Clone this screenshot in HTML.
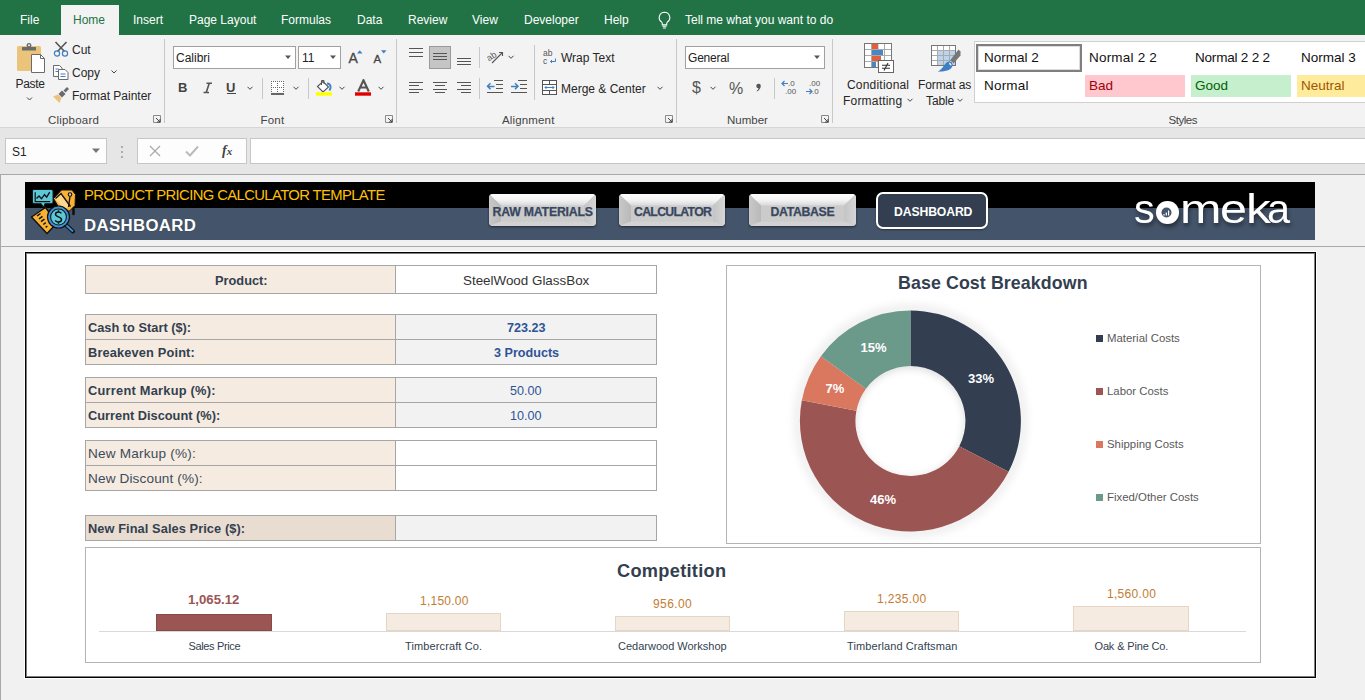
<!DOCTYPE html>
<html><head><meta charset="utf-8">
<style>
*{margin:0;padding:0;box-sizing:border-box}
html,body{width:1365px;height:700px;overflow:hidden;background:#f0f0f0}
body{position:relative;font-family:"Liberation Sans",sans-serif}
.a{position:absolute}
.t{position:absolute;white-space:nowrap;line-height:1;font-family:"Liberation Sans",sans-serif}
#tabs{position:absolute;left:0;top:0;width:1365px;height:35px;background:#217346}
#tabs .t{color:#fff;font-size:12px;top:14px}
#ribbon{position:absolute;left:0;top:35px;width:1365px;height:92px;background:#f3f3f3}
.sep{position:absolute;width:1px;background:#c8c8c8}
.rt{color:#262626;font-size:12px}
.gl{color:#444;font-size:11.5px;top:115px}
.launch{position:absolute;width:8px;height:8px}

.btn{position:absolute;top:193px;width:107px;height:33px;border-radius:4px;background:linear-gradient(#fdfdfd 0,#e6e6e6 18%,#cfcfcf 60%,#c4c4c4 100%);box-shadow:0 1px 2px rgba(0,0,0,.45),inset 0 -2px 2px rgba(0,0,0,.08);font:bold 12px "Liberation Sans",sans-serif;color:#3a4a61;text-align:center;line-height:33px;white-space:nowrap;letter-spacing:-.2px}
.cell{position:absolute;border:1px solid #a6a6a6}
.lab{left:85px;width:311px;background:#f5ebe1}
.val{left:395px;width:262px;background:#f2f2f2}
.lb{left:88px;font-size:12.8px;font-weight:bold;color:#333f4f}
.lr{left:88px;font-size:13.6px;color:#404b5a}
.lg{position:absolute;left:1096px;width:7px;height:7px}
.lgt{left:1107px;font-size:11.4px;color:#595959}
.dl{font-size:13px;font-weight:bold;color:#fff}
.sk{top:188px;font-size:41.5px;color:#fff}
.bt{top:205.5px;font-size:12.3px;font-weight:bold;color:#384760;letter-spacing:-.7px;-webkit-text-stroke:.25px #384760}
.bv{font-size:12px;color:#c27d33}
.bx{top:641px;font-size:11px;color:#333f50}
</style></head><body>

<!-- ============ TITLE TABS ============ -->
<div id="tabs">
  <div class="a" style="left:61px;top:5px;width:58px;height:30px;background:#f3f3f3"></div>
  <div class="t" style="left:20px">File</div>
  <div class="t" style="left:73px;color:#217346">Home</div>
  <div class="t" style="left:133px">Insert</div>
  <div class="t" style="left:189px">Page Layout</div>
  <div class="t" style="left:281px">Formulas</div>
  <div class="t" style="left:357px">Data</div>
  <div class="t" style="left:408px">Review</div>
  <div class="t" style="left:472px">View</div>
  <div class="t" style="left:524px">Developer</div>
  <div class="t" style="left:604px">Help</div>
  <svg class="a" style="left:657px;top:11px" width="15" height="18" viewBox="0 0 15 18"><path d="M7.5 1.2a5.3 5.3 0 0 0-3.2 9.5c.7.6 1 1.3 1 2.2v1h4.4v-1c0-.9.3-1.6 1-2.2a5.3 5.3 0 0 0-3.2-9.5z" fill="none" stroke="#fff" stroke-width="1.1"/><path d="M5.4 15.3h4.2M6 17h3" stroke="#fff" stroke-width="1.1"/></svg>
  <div class="t" style="left:685px">Tell me what you want to do</div>
</div>

<!-- ============ RIBBON ============ -->
<div id="ribbon"></div>
<div class="a" style="left:0;top:127px;width:1365px;height:1px;background:#d6d6d6"></div>

<!-- Clipboard group -->
<svg class="a" style="left:16px;top:42px" width="31" height="32" viewBox="0 0 31 32">
  <rect x="1" y="4" width="24" height="25" rx="1.5" fill="#ebc47c"/>
  <rect x="6" y="5" width="14" height="3.5" rx=".5" fill="#6b6b6b"/>
  <circle cx="13" cy="3.3" r="2.4" fill="#6b6b6b"/>
  <circle cx="13" cy="3.3" r="1" fill="#f3f3f3"/>
  <path d="M15.5 12.5h9l4 4v14h-13z" fill="#fff" stroke="#6b6b6b" stroke-width="1"/>
  <path d="M24.5 12.5v4h4" fill="none" stroke="#6b6b6b" stroke-width="1"/>
</svg>
<div class="t rt" style="left:15.5px;top:78px;letter-spacing:-.3px">Paste</div>
<svg class="a" style="left:26px;top:96px" width="7" height="6" viewBox="0 0 7 6"><path d="M1 1.5l2.5 2.5 2.5-2.5" fill="none" stroke="#444" stroke-width="1"/></svg>

<svg class="a" style="left:53px;top:41px" width="16" height="16" viewBox="0 0 16 16">
  <path d="M2.5 1l9 9.5M13.5 1l-9 9.5" stroke="#555" stroke-width="1.6"/>
  <circle cx="4" cy="12.5" r="2.6" fill="none" stroke="#3f7fc4" stroke-width="1.2"/>
  <circle cx="12" cy="12.5" r="2.6" fill="none" stroke="#3f7fc4" stroke-width="1.2"/>
</svg>
<div class="t rt" style="left:72px;top:44px">Cut</div>

<svg class="a" style="left:52px;top:64px" width="17" height="16" viewBox="0 0 17 16">
  <path d="M1.5 1.5h6l2.5 2.5v8.5h-8.5z" fill="#fff" stroke="#6b6b6b"/>
  <path d="M3.5 5h3M3.5 7.5h3" stroke="#3f7fc4"/>
  <path d="M6.5 5.5h6.5l3 3v7h-9.5z" fill="#fff" stroke="#6b6b6b"/>
  <path d="M8.5 10h5M8.5 12.5h5" stroke="#3f7fc4"/>
</svg>
<div class="t rt" style="left:72px;top:67px">Copy</div>
<svg class="a" style="left:110px;top:69px" width="8" height="6" viewBox="0 0 8 6"><path d="M1.5 1.5l2.5 2.5 2.5-2.5" fill="none" stroke="#444" stroke-width="1"/></svg>

<svg class="a" style="left:52px;top:87px" width="18" height="16" viewBox="0 0 18 16">
  <path d="M1 9.5l5-2 3.5 3.5-2 5z" fill="#ebc47c"/>
  <path d="M6.5 7l3.5 3.5 3.5-3.5-3.5-3.5z" fill="#6b6b6b"/>
  <path d="M11.5 3.5l2 2 3.5-3.5-2-2z" fill="#6b6b6b"/>
</svg>
<div class="t rt" style="left:72px;top:90px">Format Painter</div>

<div class="t gl" style="left:48px;top:114.5px;letter-spacing:.2px">Clipboard</div>
<svg class="launch" style="left:153px;top:115px" viewBox="0 0 8 8"><path d="M.5 7.5V.5h7v7z" fill="none" stroke="#8a8a8a"/><path d="M3 3l4 4M4 7h3V4" fill="none" stroke="#444"/></svg>
<div class="sep" style="left:164px;top:39px;height:84px"></div>

<!-- Font group -->
<div class="a" style="left:173px;top:46px;width:123px;height:23px;background:#fff;border:1px solid #a0a0a0"></div>
<div class="t" style="left:176px;top:52px;font-size:12px;color:#222">Calibri</div>
<svg class="a" style="left:285px;top:55px" width="7" height="5"><path d="M0 0.5h6l-3 3.5z" fill="#555"/></svg>
<div class="a" style="left:298px;top:46px;width:43px;height:23px;background:#fff;border:1px solid #a0a0a0"></div>
<div class="t" style="left:302px;top:52px;font-size:12px;color:#222">11</div>
<svg class="a" style="left:330px;top:55px" width="7" height="5"><path d="M0 0.5h6l-3 3.5z" fill="#555"/></svg>
<div class="t" style="left:348.5px;top:51px;font-size:14px;color:#444;-webkit-text-stroke:.3px #444">A</div>
<svg class="a" style="left:357px;top:49.5px" width="6" height="4"><path d="M0 3.5h5.5l-2.75-3.2z" fill="#3f7fc4"/></svg>
<div class="t" style="left:373.5px;top:53.5px;font-size:11.5px;color:#444;-webkit-text-stroke:.3px #444">A</div>
<svg class="a" style="left:381px;top:50px" width="6" height="4"><path d="M0 .3h5.5l-2.75 3.2z" fill="#3f7fc4"/></svg>

<div class="t" style="left:178px;top:81px;font-size:13px;font-weight:bold;color:#444">B</div>
<svg class="a" style="left:202px;top:82px" width="11" height="12" viewBox="0 0 11 12"><path d="M4.5 1.2h5.5M1.5 10.5h5.5M7.3 1.2L4.2 10.5" fill="none" stroke="#555" stroke-width="1.6"/></svg>
<div class="t" style="left:226px;top:81px;font-size:13px;font-weight:bold;color:#444">U</div>
<div class="a" style="left:227px;top:93px;width:9px;height:1px;background:#444"></div>
<svg class="a" style="left:247px;top:86px" width="7" height="5"><path d="M.5 .8l2.5 2.5 2.5-2.5" fill="none" stroke="#444"/></svg>
<div class="sep" style="left:262px;top:78px;height:21px"></div>
<svg class="a" style="left:270px;top:80px" width="16" height="16" viewBox="0 0 16 16" shape-rendering="crispEdges"><rect x="1" y="1" width="13" height="11" fill="#fff"/><rect x="1" y="1" width="1" height="1" fill="#666"/><rect x="1" y="3" width="1" height="1" fill="#666"/><rect x="1" y="5" width="1" height="1" fill="#666"/><rect x="1" y="7" width="1" height="1" fill="#666"/><rect x="1" y="9" width="1" height="1" fill="#666"/><rect x="1" y="11" width="1" height="1" fill="#666"/><rect x="3" y="1" width="1" height="1" fill="#666"/><rect x="3" y="7" width="1" height="1" fill="#666"/><rect x="5" y="1" width="1" height="1" fill="#666"/><rect x="5" y="7" width="1" height="1" fill="#666"/><rect x="7" y="1" width="1" height="1" fill="#666"/><rect x="7" y="3" width="1" height="1" fill="#666"/><rect x="7" y="5" width="1" height="1" fill="#666"/><rect x="7" y="7" width="1" height="1" fill="#666"/><rect x="7" y="9" width="1" height="1" fill="#666"/><rect x="7" y="11" width="1" height="1" fill="#666"/><rect x="9" y="1" width="1" height="1" fill="#666"/><rect x="9" y="7" width="1" height="1" fill="#666"/><rect x="11" y="1" width="1" height="1" fill="#666"/><rect x="11" y="7" width="1" height="1" fill="#666"/><rect x="13" y="1" width="1" height="1" fill="#666"/><rect x="13" y="3" width="1" height="1" fill="#666"/><rect x="13" y="5" width="1" height="1" fill="#666"/><rect x="13" y="7" width="1" height="1" fill="#666"/><rect x="13" y="9" width="1" height="1" fill="#666"/><rect x="13" y="11" width="1" height="1" fill="#666"/><rect x="1" y="13" width="13" height="1.5" fill="#666"/></svg>
<svg class="a" style="left:293px;top:86px" width="7" height="5"><path d="M.5 .8l2.5 2.5 2.5-2.5" fill="none" stroke="#444"/></svg>
<div class="sep" style="left:308px;top:78px;height:21px"></div>
<svg class="a" style="left:315px;top:79px" width="18" height="17" viewBox="0 0 18 17">
  <path d="M2.5 7.5l5.5-5 5.5 5.5-5.5 5z" fill="#fff" stroke="#555" stroke-width="1.1"/>
  <path d="M6.5 6V1.5h2.5V5" fill="none" stroke="#555" stroke-width="1"/>
  <path d="M12 4.5c2 0 4 1.5 3.5 4.5l-1 2.5" fill="none" stroke="#3f7fc4" stroke-width="2"/>
  <rect x="1" y="13.3" width="16" height="3.4" fill="#ffff00"/>
</svg>
<svg class="a" style="left:339px;top:86px" width="7" height="5"><path d="M.5 .8l2.5 2.5 2.5-2.5" fill="none" stroke="#444"/></svg>
<svg class="a" style="left:355px;top:79px" width="17" height="17" viewBox="0 0 17 17">
  <path d="M3.2 12.5L8.5 1.2 13.8 12.5M5.2 8.5h6.6" fill="none" stroke="#555" stroke-width="2.1"/>
  <rect x="0" y="13.3" width="16" height="3.4" fill="#e00000"/>
</svg>
<svg class="a" style="left:378px;top:86px" width="7" height="5"><path d="M.5 .8l2.5 2.5 2.5-2.5" fill="none" stroke="#444"/></svg>
<div class="t gl" style="left:260.5px;top:114.5px;letter-spacing:.2px">Font</div>
<svg class="launch" style="left:385px;top:115px" viewBox="0 0 8 8"><path d="M.5 7.5V.5h7v7z" fill="none" stroke="#8a8a8a"/><path d="M3 3l4 4M4 7h3V4" fill="none" stroke="#444"/></svg>
<div class="sep" style="left:396px;top:39px;height:84px"></div>

<!-- Alignment group -->
<svg class="a" style="left:408px;top:48px" width="16" height="9"><path d="M1 .5h14M1 4.5h14M1 8.5h14" stroke="#555"/></svg>
<div class="a" style="left:429px;top:46px;width:22px;height:23px;background:#c5c5c5;border:1px solid #9a9a9a"></div>
<svg class="a" style="left:433px;top:52px" width="15" height="9"><path d="M0 1.5h14M0 4.5h14M0 7.5h14" stroke="#555"/></svg>
<svg class="a" style="left:456px;top:57px" width="16" height="9"><path d="M1 1.5h14M1 4.5h14M1 7.5h14" stroke="#555"/></svg>
<div class="sep" style="left:479px;top:47px;height:21px"></div>
<svg class="a" style="left:486px;top:49px" width="19" height="16" viewBox="0 0 19 16">
  <text x="1" y="10" font-size="9" font-family="Liberation Sans" fill="#555" transform="rotate(-35 6 8)">ab</text>
  <path d="M6 14L16.5 3.5M13 3.5h3.5v3.5" fill="none" stroke="#555" stroke-width="1.1"/>
</svg>
<svg class="a" style="left:508px;top:55px" width="7" height="5"><path d="M.5 .8l2.5 2.5 2.5-2.5" fill="none" stroke="#444"/></svg>
<div class="sep" style="left:534px;top:45px;height:55px"></div>
<svg class="a" style="left:543px;top:49px" width="15" height="16" viewBox="0 0 15 16">
  <text x="0" y="7" font-size="8.5" font-family="Liberation Sans" fill="#555">ab</text>
  <text x="0" y="15" font-size="8.5" font-family="Liberation Sans" fill="#555">c</text>
  <path d="M12.5 9.5v3h-5M9 11l-1.5 1.5L9 14" fill="none" stroke="#3f7fc4" stroke-width="1"/>
</svg>
<div class="t rt" style="left:561px;top:52px">Wrap Text</div>

<svg class="a" style="left:408px;top:82px" width="16" height="12"><path d="M1 .5h14M1 3.5h10M1 7.5h14M1 10.5h10" stroke="#555"/></svg>
<svg class="a" style="left:432px;top:82px" width="16" height="12"><path d="M1 .5h14M3 3.5h10M1 7.5h14M3 10.5h10" stroke="#555"/></svg>
<svg class="a" style="left:456px;top:82px" width="16" height="12"><path d="M1 .5h14M5 3.5h10M1 7.5h14M5 10.5h10" stroke="#555"/></svg>
<div class="sep" style="left:479px;top:78px;height:21px"></div>
<svg class="a" style="left:486px;top:80px" width="18" height="15" viewBox="0 0 18 15"><path d="M8 .5h9M10 4.5h7M10 8.5h7M1 12.5h16" stroke="#555"/><path d="M1.5 6.5h7M4.5 3.3l-3 3 3 3" fill="none" stroke="#3f7fc4" stroke-width="1.5"/></svg>
<svg class="a" style="left:510px;top:80px" width="18" height="15" viewBox="0 0 18 15"><path d="M8 .5h9M10 4.5h7M10 8.5h7M1 12.5h16" stroke="#555"/><path d="M1 6.5h7M5 3.3l3 3-3 3" fill="none" stroke="#3f7fc4" stroke-width="1.5"/></svg>
<div class="sep" style="left:479px;top:78px;height:21px"></div>
<svg class="a" style="left:542px;top:80px" width="16" height="16" viewBox="0 0 16 16">
  <rect x=".5" y=".5" width="14" height="14" fill="#fff" stroke="#555"/>
  <path d="M.5 4.5h14M.5 10.5h14M7.5 .5v4M7.5 10.5v4" stroke="#555"/>
  <path d="M3 7.5h9M4.5 6l-1.5 1.5L4.5 9M10.5 6l1.5 1.5-1.5 1.5" fill="none" stroke="#3f7fc4"/>
</svg>
<div class="t rt" style="left:561px;top:83px">Merge &amp; Center</div>
<svg class="a" style="left:657px;top:86px" width="7" height="5"><path d="M.5 .8l2.5 2.5 2.5-2.5" fill="none" stroke="#444"/></svg>
<div class="t gl" style="left:502px;top:114.5px;letter-spacing:.15px">Alignment</div>
<svg class="launch" style="left:665px;top:115px" viewBox="0 0 8 8"><path d="M.5 7.5V.5h7v7z" fill="none" stroke="#8a8a8a"/><path d="M3 3l4 4M4 7h3V4" fill="none" stroke="#444"/></svg>
<div class="sep" style="left:676px;top:39px;height:84px"></div>

<!-- Number group -->
<div class="a" style="left:685px;top:46px;width:140px;height:23px;background:#fff;border:1px solid #a0a0a0"></div>
<div class="t" style="left:688px;top:52px;font-size:12px;letter-spacing:-.2px;color:#222">General</div>
<svg class="a" style="left:814px;top:55px" width="7" height="5"><path d="M0 0.5h6l-3 3.5z" fill="#555"/></svg>
<div class="t" style="left:692px;top:80px;font-size:16px;color:#555">$</div>
<svg class="a" style="left:710px;top:86px" width="7" height="5"><path d="M.5 .8l2.5 2.5 2.5-2.5" fill="none" stroke="#444"/></svg>
<div class="t" style="left:729px;top:80.5px;font-size:16px;color:#555">%</div>
<svg class="a" style="left:755px;top:83px" width="7" height="9" viewBox="0 0 7 9"><path d="M3.5 .8a2.2 2.2 0 0 1 2.3 2.3c0 2.2-1.5 4.3-3.8 5.4l-.4-.6c1.1-.8 1.8-1.7 1.9-2.7a2.2 2.2 0 0 1-2.2-2.2A2.2 2.2 0 0 1 3.5.8z" fill="#555"/></svg>
<div class="sep" style="left:774px;top:78px;height:21px"></div>
<svg class="a" style="left:781px;top:79px" width="17" height="17" viewBox="0 0 17 17">
  <text x="7" y="7" font-size="8" font-family="Liberation Sans" fill="#555">.0</text>
  <text x="4" y="15" font-size="8" font-family="Liberation Sans" fill="#555">.00</text>
  <path d="M1 4.5h6M3.5 2l-2.5 2.5 2.5 2.5" fill="none" stroke="#3f7fc4" stroke-width="1.2"/>
</svg>
<svg class="a" style="left:805px;top:79px" width="17" height="17" viewBox="0 0 17 17">
  <text x="4" y="7" font-size="8" font-family="Liberation Sans" fill="#555">.00</text>
  <text x="7" y="15" font-size="8" font-family="Liberation Sans" fill="#555">.0</text>
  <path d="M1 12.5h6M4.5 10l2.5 2.5-2.5 2.5" fill="none" stroke="#3f7fc4" stroke-width="1.2"/>
</svg>
<div class="t gl" style="left:727px">Number</div>
<svg class="launch" style="left:821px;top:115px" viewBox="0 0 8 8"><path d="M.5 7.5V.5h7v7z" fill="none" stroke="#8a8a8a"/><path d="M3 3l4 4M4 7h3V4" fill="none" stroke="#444"/></svg>
<div class="sep" style="left:832px;top:39px;height:84px"></div>

<!-- Styles: conditional formatting / format as table -->
<svg class="a" style="left:863px;top:42px" width="32" height="32" viewBox="0 0 32 32">
  <rect x="1.5" y="1.5" width="27" height="24" fill="#fff"/>
  <path d="M1.5 7.5h27M1.5 13.5h27M1.5 19.5h27M8.5 1.5v24M15 1.5v24M21.5 1.5v24" stroke="#aaa" stroke-width="1" fill="none"/>
  <rect x="9" y="2" width="6" height="5" fill="#e0603c"/>
  <rect x="9" y="8" width="11" height="5" fill="#4a86c5"/>
  <rect x="9" y="14" width="9" height="5" fill="#e0603c"/>
  <rect x="9" y="20" width="4" height="5.5" fill="#4a86c5"/>
  <rect x="1.5" y="1.5" width="27" height="24" fill="none" stroke="#777" stroke-width="1"/>
  <rect x="15.5" y="18.5" width="15" height="12" fill="#fff" stroke="#666" stroke-width="1"/>
  <path d="M19 23.3h8M19 26.3h8M25 21l-4 7.5" stroke="#333" stroke-width="1.1"/>
</svg>
<div class="t rt" style="left:847px;top:79px;letter-spacing:.2px">Conditional</div>
<div class="t rt" style="left:843px;top:95px;letter-spacing:.2px">Formatting</div>
<svg class="a" style="left:907px;top:98px" width="7" height="5"><path d="M.5 .8l2.5 2.5 2.5-2.5" fill="none" stroke="#444"/></svg>
<svg class="a" style="left:930px;top:44px" width="32" height="30" viewBox="0 0 32 30">
  <rect x="1.5" y="1.5" width="24" height="20" fill="#fff"/>
  <rect x="7.5" y="6.5" width="18" height="15" fill="#bcd3ec"/>
  <path d="M1.5 6.5h24M1.5 11.5h24M1.5 16.5h24M7.5 1.5v20M13.5 1.5v20M19.5 1.5v20" stroke="#aaa" stroke-width="1" fill="none"/>
  <rect x="1.5" y="1.5" width="24" height="20" fill="none" stroke="#777" stroke-width="1"/>
  <path d="M28.5 5.5L30.5 7.5 30.5 11.5 23.5 19.5 20 16.5z" fill="#777"/>
  <path d="M20 17l3 2.5" stroke="#f3f3f3" stroke-width="1"/>
  <path d="M19.5 17.5c2 .2 3.3 1.6 3.2 3.5-.2 2.6-2.6 4.6-5.5 5.6-3.2 1-6 1-9.5 1.2 2.5-1.3 4.6-3.8 6.5-6.5 1.5-2.3 3-3.9 5.3-3.8z" fill="#3f7fc4"/>
  <path d="M19.2 19.5c1 .1 1.8.9 1.6 1.8" stroke="#fff" stroke-width="1.3" fill="none"/>
</svg>
<div class="t rt" style="left:918px;top:79px;letter-spacing:-.1px">Format as</div>
<div class="t rt" style="left:926px;top:95px;letter-spacing:-.1px">Table</div>
<svg class="a" style="left:957px;top:98px" width="7" height="5"><path d="M.5 .8l2.5 2.5 2.5-2.5" fill="none" stroke="#444"/></svg>

<!-- Styles gallery -->
<div class="a" style="left:974px;top:41px;width:400px;height:62px;background:#fff;border:1px solid #d0d0d0"></div>
<div class="a" style="left:976px;top:44px;width:106px;height:28px;border:2px solid #7f7f7f;box-shadow:inset 0 0 0 1px #dcdcdc"></div>
<div class="t" style="left:984px;top:51px;font-size:13.5px;color:#111">Normal 2</div>
<div class="t" style="left:1089px;top:51px;font-size:13.5px;letter-spacing:.2px;color:#111">Normal 2 2</div>
<div class="t" style="left:1195px;top:51px;font-size:13.5px;letter-spacing:-.2px;color:#111">Normal 2 2 2</div>
<div class="t" style="left:1301px;top:51px;font-size:13.5px;color:#111">Normal 3</div>
<div class="a" style="left:1085px;top:75px;width:100px;height:22px;background:#ffc7ce"></div>
<div class="a" style="left:1191px;top:75px;width:100px;height:22px;background:#c6efce"></div>
<div class="a" style="left:1297px;top:75px;width:80px;height:22px;background:#ffeb9c"></div>
<div class="t" style="left:984px;top:79px;font-size:13.5px;letter-spacing:.2px;color:#111">Normal</div>
<div class="t" style="left:1089px;top:79px;font-size:13.5px;color:#9c0006">Bad</div>
<div class="t" style="left:1195px;top:79px;font-size:13.5px;color:#006100">Good</div>
<div class="t" style="left:1301px;top:79px;font-size:13.5px;color:#9c5700">Neutral</div>
<div class="t gl" style="left:1168.5px;top:114.5px;letter-spacing:-.45px">Styles</div>

<!-- ============ FORMULA BAR ============ -->
<div class="a" style="left:0;top:128px;width:1365px;height:46px;background:#e6e6e6"></div>
<div class="a" style="left:5px;top:138px;width:102px;height:26px;background:#fdfdfd;border:1px solid #c6c6c6"></div>
<div class="t" style="left:12px;top:146px;font-size:12px;color:#222">S1</div>
<svg class="a" style="left:92px;top:148px" width="9" height="6"><path d="M0 .5h8l-4 4.5z" fill="#777"/></svg>
<svg class="a" style="left:120px;top:145px" width="4" height="14"><circle cx="2" cy="2" r="1" fill="#999"/><circle cx="2" cy="7" r="1" fill="#999"/><circle cx="2" cy="12" r="1" fill="#999"/></svg>
<div class="a" style="left:137px;top:138px;width:110px;height:26px;background:#fdfdfd;border:1px solid #c6c6c6"></div>
<svg class="a" style="left:149px;top:145px" width="12" height="12"><path d="M1 1l10 10M11 1L1 11" stroke="#aaa" stroke-width="1.3"/></svg>
<svg class="a" style="left:185px;top:145px" width="14" height="12"><path d="M1 6.5l4 4 8-9" fill="none" stroke="#bbb" stroke-width="2"/></svg>
<div class="t" style="left:222px;top:144px;font-size:14px;font-style:italic;font-weight:bold;color:#444;font-family:'Liberation Serif'">f<span style="font-size:11px">x</span></div>
<div class="a" style="left:250px;top:138px;width:1120px;height:26px;background:#fff;border:1px solid #c6c6c6"></div>
<div class="a" style="left:0;top:174px;width:1365px;height:1px;background:#a8a8a8"></div>



<!-- ============ SHEET ============ -->
<div class="a" style="left:0;top:175px;width:1365px;height:525px;background:#f1f1f1"></div>
<div class="a" style="left:0;top:175px;width:1px;height:525px;background:#a8a8a8"></div>

<!-- Banner -->
<div class="a" style="left:25px;top:182px;width:1290px;height:26px;background:#000"></div>
<div class="a" style="left:25px;top:208px;width:1290px;height:32px;background:#44546a"></div>
<svg class="a" style="left:28px;top:186px" width="52" height="52" viewBox="0 0 52 52">
  <!-- document -->
  <path d="M3.5 31L17.5 21.5 29 37 19 47.5z" fill="#f9b233" stroke="#111" stroke-width="1.4" stroke-linejoin="round"/>
  <path d="M9 30l3.5-2.5M11 32.8l3.5-2.5M13 35.6l3.5-2.5M15.3 38.5l2.5-1.8M17.6 41.3l1.8-1.3" stroke="#111" stroke-width="1.5"/>
  <!-- tag -->
  <path d="M25.5 12.5L33.5 4h10.5l3.5 4.5-.5 11-5.5 5.5-8 1z" fill="#f9b233" stroke="#111" stroke-width="1"/>
  <path d="M27 13l6.5-6 8.5 11.5-5 5.5z" fill="#ffd68e"/>
  <path d="M27.5 12.5l5.5-5 9.5 13" fill="none" stroke="#111" stroke-width="1.4"/>
  <circle cx="42" cy="8.5" r="1.8" fill="#f4b9a0" stroke="#111" stroke-width="1.1"/>
  <path d="M42 10.3L40.5 21" fill="none" stroke="#111" stroke-width="1.3"/>
  <path d="M45.5 23v5" stroke="#111" stroke-width="2.6" stroke-linecap="round"/>
  <!-- chart bubble -->
  <path d="M6 3.5h17.5a1.6 1.6 0 0 1 1.6 1.6v11a1.6 1.6 0 0 1-1.6 1.6h-6.5l-1.2 3.8-2.8-3.8h-7a1.6 1.6 0 0 1-1.6-1.6v-11a1.6 1.6 0 0 1 1.6-1.6z" fill="#5cc9d9" stroke="#111" stroke-width="1.1"/>
  <path d="M7.2 6.2v9.5h15" fill="none" stroke="#111" stroke-width="1.2"/>
  <path d="M8.5 12.5l2.5-2.5 2.5 2.8 3-4.2 2.2 2.6 3-5" fill="none" stroke="#111" stroke-width="1.3"/>
  <!-- magnifier -->
  <path d="M37.5 38.5l7.5 7" stroke="#111" stroke-width="4" stroke-linecap="round"/>
  <path d="M38 39l6.5 6" stroke="#3d8fd6" stroke-width="1.8" stroke-linecap="round"/>
  <circle cx="30.5" cy="31" r="11.6" fill="#111"/>
  <circle cx="30.5" cy="31" r="10.4" fill="#3d8fd6"/>
  <circle cx="30.5" cy="31" r="8.4" fill="#111"/>
  <circle cx="30.5" cy="31" r="7.4" fill="#5cc9d9"/>
  <path d="M33.4 27.4c-.7-1-1.7-1.5-2.9-1.5-1.8 0-3 1-3 2.4 0 3.1 6 2 6 5.3 0 1.5-1.3 2.5-3.1 2.5-1.4 0-2.5-.6-3.2-1.7M30.5 24.2v1.6M30.5 36.2v1.6" fill="none" stroke="#111" stroke-width="1.5"/>
</svg>
<div class="t" style="left:84px;top:188.2px;font-size:14.8px;letter-spacing:-.6px;color:#ffc000">PRODUCT PRICING CALCULATOR TEMPLATE</div>
<div class="t" style="left:84px;top:217.5px;font-size:16.8px;letter-spacing:.35px;font-weight:bold;color:#fff;text-shadow:0 0 1px rgba(0,0,0,.4)">DASHBOARD</div>

<!-- nav buttons -->
<svg width="0" height="0" style="position:absolute"><defs>
<linearGradient id="gt" x1="0" y1="0" x2="0" y2="1"><stop offset="0" stop-color="#fdfdfd"/><stop offset=".5" stop-color="#f5f5f5"/><stop offset="1" stop-color="#d9d9d9"/></linearGradient>
<linearGradient id="gl" x1="0" y1="0" x2="1" y2="0"><stop offset="0" stop-color="#c8c8c8"/><stop offset="1" stop-color="#b9b9b9"/></linearGradient>
<linearGradient id="gr" x1="0" y1="0" x2="1" y2="0"><stop offset="0" stop-color="#c4c4c4"/><stop offset="1" stop-color="#d6d6d6"/></linearGradient>
</defs></svg>
<svg class="a" style="left:489px;top:194px;filter:drop-shadow(0 1.5px 1px rgba(0,0,0,.5))" width="107" height="32" viewBox="0 0 107 32">
  <defs><clipPath id="c489"><rect width="107" height="32" rx="4"/></clipPath></defs>
  <g clip-path="url(#c489)">
  <rect width="107" height="32" fill="#cbcbcb"/>
  <path d="M0 0H107L95 11.5H12z" fill="url(#gt)"/>
  <path d="M0 0L12 11.5V27.5L0 32z" fill="url(#gl)"/>
  <path d="M107 0L95 11.5V27.5L107 32z" fill="url(#gr)"/>
  <path d="M0 32L12 27.5H95L107 32z" fill="#d2d2d2"/>
  </g>
</svg>
<div class="t bt" style="left:492.5px;letter-spacing:-.2px">RAW MATERIALS</div>
<svg class="a" style="left:619px;top:194px;filter:drop-shadow(0 1.5px 1px rgba(0,0,0,.5))" width="106" height="32" viewBox="0 0 106 32">
  <defs><clipPath id="c619"><rect width="106" height="32" rx="4"/></clipPath></defs>
  <g clip-path="url(#c619)">
  <rect width="106" height="32" fill="#cbcbcb"/>
  <path d="M0 0H106L94 11.5H12z" fill="url(#gt)"/>
  <path d="M0 0L12 11.5V27.5L0 32z" fill="url(#gl)"/>
  <path d="M106 0L94 11.5V27.5L106 32z" fill="url(#gr)"/>
  <path d="M0 32L12 27.5H94L106 32z" fill="#d2d2d2"/>
  </g>
</svg>
<div class="t bt" style="left:634px">CALCULATOR</div>
<svg class="a" style="left:749px;top:194px;filter:drop-shadow(0 1.5px 1px rgba(0,0,0,.5))" width="107" height="32" viewBox="0 0 107 32">
  <defs><clipPath id="c749"><rect width="107" height="32" rx="4"/></clipPath></defs>
  <g clip-path="url(#c749)">
  <rect width="107" height="32" fill="#cbcbcb"/>
  <path d="M0 0H107L95 11.5H12z" fill="url(#gt)"/>
  <path d="M0 0L12 11.5V27.5L0 32z" fill="url(#gl)"/>
  <path d="M107 0L95 11.5V27.5L107 32z" fill="url(#gr)"/>
  <path d="M0 32L12 27.5H95L107 32z" fill="#d2d2d2"/>
  </g>
</svg>
<div class="t bt" style="left:770.5px;letter-spacing:-.33px">DATABASE</div>
<div class="a" style="left:876px;top:192px;width:112px;height:37px;border:2.5px solid #fff;border-radius:7px;background:#333f50;box-shadow:0 1px 2px rgba(0,0,0,.4)"></div>
<div class="t" style="left:894px;top:206px;font-size:12.2px;font-weight:bold;color:#fff;letter-spacing:-.1px">DASHBOARD</div>

<!-- someka logo -->
<div class="a" style="left:0;top:0;filter:drop-shadow(1px 3px 2px rgba(0,0,0,.45))">
<div class="t sk" style="left:1134px">s</div>
<div class="a" style="left:1156px;top:201px;width:22.5px;height:22.5px;border-radius:50%;background:#fff"></div>
<svg class="a" style="left:1160px;top:206px" width="13" height="13" viewBox="0 0 13 13"><circle cx="6.5" cy="6.5" r="5" fill="#44546a"/><path d="M4 9.5V8M6.3 9.5V6.5M8.6 9.5V4.5" stroke="#fff" stroke-width="1.2"/></svg>
<div class="t sk" style="left:1180px;transform:scaleX(1.2);transform-origin:0 0">m</div>
<div class="t sk" style="left:1219.5px;transform:scaleX(1.17);transform-origin:0 0">e</div>
<div class="t sk" style="left:1245.5px;transform:scaleX(1.2);transform-origin:0 0">k</div>
<div class="t sk" style="left:1267px">a</div>
</div>
<div class="a" style="left:0;top:246px;width:1365px;height:1px;background:#a9a9a9"></div>

<!-- Dashboard frame -->
<div class="a" style="left:25px;top:252px;width:1291px;height:426px;background:#fff;border:1px solid #000;box-shadow:inset 0 0 0 1px rgba(0,0,0,.5),0 0 0 1px #fff"></div>

<!-- table -->
<div class="cell lab" style="top:265px;height:29px"></div><div class="cell val" style="top:265px;height:29px;background:#fff"></div>
<div class="t" style="left:215px;top:275px;font-size:12.8px;font-weight:bold;color:#333f4f">Product:</div>
<div class="t" style="left:463px;top:274px;font-size:13.4px;color:#333">SteelWood GlassBox</div>

<div class="cell lab" style="top:314px;height:26px"></div><div class="cell val" style="top:314px;height:26px"></div>
<div class="cell lab" style="top:339px;height:26px"></div><div class="cell val" style="top:339px;height:26px"></div>
<div class="t lb" style="top:322px">Cash to Start ($):</div>
<div class="t lb" style="top:347px;letter-spacing:.15px">Breakeven Point:</div>
<div class="t" style="left:507px;top:322px;font-size:12.6px;font-weight:bold;color:#2f5496">723.23</div>
<div class="t" style="left:494px;top:347px;font-size:12.6px;font-weight:bold;color:#2f5496">3 Products</div>

<div class="cell lab" style="top:377px;height:26px"></div><div class="cell val" style="top:377px;height:26px"></div>
<div class="cell lab" style="top:402px;height:26px"></div><div class="cell val" style="top:402px;height:26px"></div>
<div class="t lb" style="top:385px;letter-spacing:.25px">Current Markup (%):</div>
<div class="t lb" style="top:410px">Current Discount (%):</div>
<div class="t" style="left:510px;top:385px;font-size:12.6px;color:#2f5496">50.00</div>
<div class="t" style="left:510px;top:410px;font-size:12.6px;color:#2f5496">10.00</div>

<div class="cell lab" style="top:440px;height:26px"></div><div class="cell val" style="top:440px;height:26px;background:#fff"></div>
<div class="cell lab" style="top:465px;height:26px"></div><div class="cell val" style="top:465px;height:26px;background:#fff"></div>
<div class="t lr" style="top:447px;letter-spacing:.2px">New Markup (%):</div>
<div class="t lr" style="top:472px;letter-spacing:.13px">New Discount (%):</div>

<div class="cell lab" style="top:515px;height:26px;background:#e9ddd2"></div><div class="cell val" style="top:515px;height:26px"></div>
<div class="t lb" style="top:523px;letter-spacing:.08px">New Final Sales Price ($):</div>

<!-- donut chart box -->
<div class="a" style="left:726px;top:265px;width:535px;height:279px;border:1px solid #b4b4b4;background:#fff"></div>
<div class="t" style="left:898px;top:275px;letter-spacing:.1px;font-size:17.8px;font-weight:bold;color:#333f50">Base Cost Breakdown</div>
<svg class="a" style="left:780px;top:291px" width="262" height="262" viewBox="0 0 262 262">
  <defs><filter id="sh" x="-20%" y="-20%" width="140%" height="140%"><feGaussianBlur stdDeviation="5"/></filter></defs>
  <circle cx="130.4" cy="130" r="112" fill="none" stroke="rgba(0,0,0,.10)" stroke-width="6" filter="url(#sh)"/>
  <g><path d="M130.40 19.50A110.5 110.5 0 0 1 228.59 180.68L179.27 155.23A55 55 0 0 0 130.40 75.00Z" fill="#333f50" stroke="none"/><path d="M228.59 180.68A110.5 110.5 0 0 1 21.86 109.29L76.37 119.69A55 55 0 0 0 179.27 155.23Z" fill="#9b5553" stroke="none"/><path d="M21.86 109.29A110.5 110.5 0 0 1 40.89 65.21L85.85 97.75A55 55 0 0 0 76.37 119.69Z" fill="#d9785f" stroke="none"/><path d="M40.89 65.21A110.5 110.5 0 0 1 130.40 19.50L130.40 75.00A55 55 0 0 0 85.85 97.75Z" fill="#6b998a" stroke="none"/></g>
</svg>
<div class="a" style="left:855.4px;top:366px;width:110px;height:110px;border-radius:50%;box-shadow:inset 0 2px 8px rgba(0,0,0,.15)"></div>
<div class="lg" style="top:335px;background:#333f50"></div><div class="t lgt" style="top:333px">Material Costs</div>
<div class="lg" style="top:388px;background:#9b5553"></div><div class="t lgt" style="top:386px">Labor Costs</div>
<div class="lg" style="top:441px;background:#d9785f"></div><div class="t lgt" style="top:439px">Shipping Costs</div>
<div class="lg" style="top:494px;background:#6b998a"></div><div class="t lgt" style="top:492px">Fixed/Other Costs</div>


<div class="t dl" style="left:968px;top:371.5px">33%</div>
<div class="t dl" style="left:870px;top:493px">46%</div>
<div class="t dl" style="left:825.5px;top:382px">7%</div>
<div class="t dl" style="left:860.5px;top:341px">15%</div>

<!-- competition -->
<div class="a" style="left:85px;top:547px;width:1176px;height:116px;border:1px solid #b4b4b4;background:#fff"></div>
<div class="t" style="left:617px;top:562px;letter-spacing:.3px;font-size:18.2px;font-weight:bold;color:#333f50">Competition</div>
<div class="a" style="left:99px;top:631px;width:1147px;height:1px;background:#d9d9d9"></div>
<div class="a" style="left:156px;top:614px;width:116px;height:17px;background:#9b5553;border:1px solid #8a4846"></div>
<div class="a" style="left:386px;top:613px;width:115px;height:18px;background:#f5ebe1;border:1px solid #e6d5c5"></div>
<div class="a" style="left:615px;top:616px;width:115px;height:15px;background:#f5ebe1;border:1px solid #e6d5c5"></div>
<div class="a" style="left:844px;top:611px;width:115px;height:20px;background:#f5ebe1;border:1px solid #e6d5c5"></div>
<div class="a" style="left:1073px;top:606px;width:116px;height:25px;background:#f5ebe1;border:1px solid #e6d5c5"></div>
<div class="t" style="left:188px;top:593px;font-size:13.2px;font-weight:bold;color:#9b5553">1,065.12</div>
<div class="t bv" style="left:420px;top:595px;letter-spacing:.25px">1,150.00</div>
<div class="t bv" style="left:653px;top:598px;letter-spacing:.4px">956.00</div>
<div class="t bv" style="left:877px;top:593px;letter-spacing:.35px">1,235.00</div>
<div class="t bv" style="left:1107px;top:588px;letter-spacing:.3px">1,560.00</div>
<div class="t bx" style="left:188.5px;letter-spacing:-.35px">Sales Price</div>
<div class="t bx" style="left:405px;letter-spacing:.12px">Timbercraft Co.</div>
<div class="t bx" style="left:618px">Cedarwood Workshop</div>
<div class="t bx" style="left:847px;letter-spacing:.1px">Timberland Craftsman</div>
<div class="t bx" style="left:1094.5px;letter-spacing:-.15px">Oak &amp; Pine Co.</div>
</body></html>
